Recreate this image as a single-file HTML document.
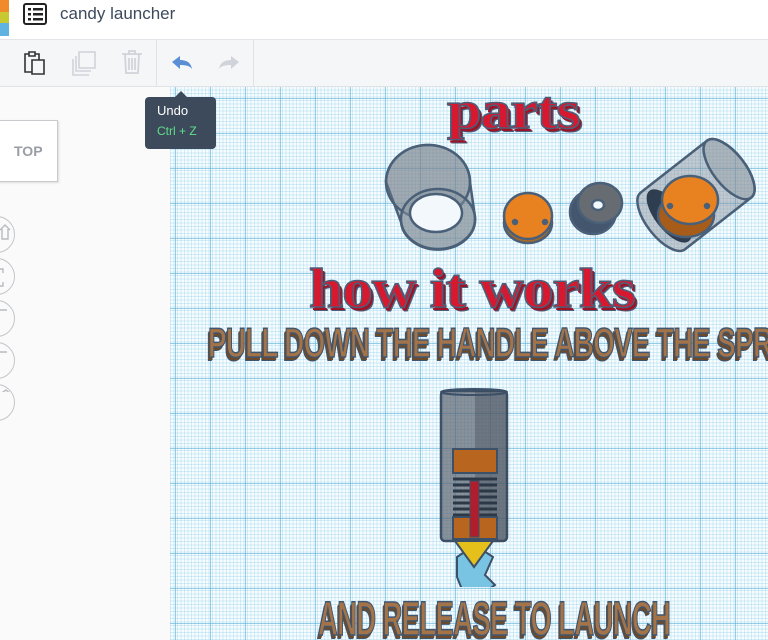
<!DOCTYPE html>
<html><head><meta charset="utf-8"><style>
*{margin:0;padding:0;box-sizing:border-box}
body{width:768px;height:640px;overflow:hidden;position:relative;font-family:"Liberation Sans",sans-serif;background:#fafafa}
.hdr{position:absolute;left:0;top:0;width:768px;height:40px;background:#fff;border-bottom:1px solid #e2e4e8}
.tb{position:absolute;left:0;top:40px;width:768px;height:47px;background:#f5f6f8;border-bottom:1px solid #e0e2e6}
.grid{position:absolute;left:170px;top:87px;width:598px;height:553px;background-color:#f7fcfe;
background-image:
linear-gradient(90deg,rgba(90,175,215,.6) 1px,transparent 1px),
linear-gradient(0deg,rgba(90,175,215,.6) 1px,transparent 1px),
linear-gradient(90deg,rgba(130,200,232,.3) 1px,transparent 1px),
linear-gradient(0deg,rgba(130,200,232,.3) 1px,transparent 1px);
background-size:35px 35px,35px 35px,3.5px 3.5px,3.5px 3.5px;background-position:5px 0,0 12px,0 0,0 0;overflow:hidden}
.t{position:absolute;white-space:nowrap}
.serif{font-family:"Liberation Serif",serif;font-weight:bold;color:#d7192f;-webkit-text-stroke:1.5px #4a5f7a;text-shadow:2px 3px 0 #a01225,3px 4px 0 #4a5f7a;transform-origin:0 0}
.cond{font-family:"Liberation Sans Narrow","Liberation Sans",sans-serif;font-weight:bold;color:#a47448;-webkit-text-stroke:1.5px #3f5670;text-shadow:-2px 3px 0 #6b4a2c,-3px 4px 0 #3f5670;transform-origin:0 0}
.circ{position:absolute;left:-22px;width:37px;height:37px;border:1.5px solid #c4c6ca;border-radius:50%;background:#fafafa}
</style></head><body>
<div class="hdr">
 <div style="position:absolute;left:0;top:0;width:9px;height:12px;background:#f08a2a"></div>
 <div style="position:absolute;left:0;top:12px;width:9px;height:11px;background:#c8c930"></div>
 <div style="position:absolute;left:0;top:23px;width:9px;height:13px;background:#5fb3e0"></div>
 <svg style="position:absolute;left:23px;top:3px" width="24" height="22" viewBox="0 0 24 22"><rect x="1" y="1" width="22" height="20" rx="2" fill="none" stroke="#222" stroke-width="2"/><g fill="#222"><rect x="5" y="5" width="3" height="2.5"/><rect x="10" y="5" width="10" height="2.5"/><rect x="5" y="10" width="3" height="2.5"/><rect x="10" y="10" width="10" height="2.5"/><rect x="5" y="15" width="3" height="2.5"/><rect x="10" y="15" width="10" height="2.5"/></g></svg>
 <div class="t" style="left:60px;top:4px;font-size:17px;color:#3c4a5c">candy launcher</div>
</div>
<div class="tb"></div>
<svg style="position:absolute;left:22px;top:50px" width="26" height="26" viewBox="0 0 26 26" fill="none" stroke="#333" stroke-width="1.6"><path d="M3 4h14v18H3z"/><path d="M7 2h6v4H7z" fill="#f5f6f8"/><path d="M10 10h12v14H10z" fill="#f5f6f8"/></svg>
<svg style="position:absolute;left:70px;top:50px" width="28" height="28" viewBox="0 0 28 28" fill="none" stroke="#d0d4da" stroke-width="1.6"><rect x="9" y="2" width="16" height="16"/><path d="M6 6v15h15"/><path d="M3 9v16h16"/></svg>
<svg style="position:absolute;left:120px;top:48px" width="24" height="28" viewBox="0 0 24 28" fill="none" stroke="#d0d4da" stroke-width="1.8"><path d="M2 6h20M9 6V3h6v3M5 6l1 19h12l1-19M9 10v12M12 10v12M15 10v12"/></svg>
<div style="position:absolute;left:156px;top:40px;width:1px;height:47px;background:#e0e2e6"></div>
<div style="position:absolute;left:253px;top:40px;width:1px;height:47px;background:#e0e2e6"></div>
<svg style="position:absolute;left:170px;top:54px" width="24" height="18" viewBox="0 0 24 18"><path d="M2 8l8-6v4c7 0 11 3 12 9-2-3-6-4-12-4v4z" fill="#5a8fd6"/></svg>
<svg style="position:absolute;left:217px;top:54px" width="24" height="18" viewBox="0 0 24 18"><path d="M22 8l-8-6v4C7 6 3 9 2 15c2-3 6-4 12-4v4z" fill="#d0d4da"/></svg>

<div style="position:absolute;left:-10px;top:120px;width:68px;height:62px;background:#fff;border:1.5px solid #c8cacd;box-shadow:1px 1px 2px #ddd"></div>
<div class="t" style="left:14px;top:143px;font-size:14px;font-weight:bold;color:#9a9ea4">TOP</div>
<div class="circ" style="top:216px"></div>
<div class="circ" style="top:258px"></div>
<div class="circ" style="top:300px"></div>
<div class="circ" style="top:342px"></div>
<div class="circ" style="top:384px"></div>
<svg style="position:absolute;left:0;top:222px" width="12" height="170" fill="none" stroke="#b8bbc0" stroke-width="1.4"><path d="M0 8l5-5 5 5M2 7v10h6V7"/><path d="M0 47h3v4M0 64h3v-4"/><path d="M0 88h7M0 130h7"/><path d="M0 172l6-4 5 4-6 5z"/></svg>

<div class="grid">
 <div class="t serif" style="left:277px;top:-8px;font-size:54px;letter-spacing:-1px;transform:scaleX(1.15)">parts</div>
 <svg style="position:absolute;left:0;top:0" width="598" height="553">
  <g stroke="#4a6078" stroke-width="2.5">
   <path d="M216 95 A42 37 0 0 1 300 95 L305 130 A37 30 0 0 1 231 135 Z" fill="rgba(120,130,140,.5)"/>
   <ellipse cx="258" cy="95" rx="42" ry="37" fill="rgba(120,130,140,.35)"/>
   <ellipse cx="268" cy="132" rx="37" ry="30" fill="rgba(140,150,160,.45)"/>
   <ellipse cx="266" cy="126" rx="26" ry="19" fill="#f2f8fb"/>
   <ellipse cx="358" cy="136" rx="24" ry="20" fill="#b26a1e"/>
   <ellipse cx="358" cy="129" rx="24" ry="23" fill="#e88220"/>
   <circle cx="345" cy="135" r="2" fill="#4a6078"/><circle cx="375" cy="135" r="2" fill="#4a6078"/>
   <ellipse cx="423" cy="125" rx="23" ry="22" fill="#44566e"/>
   <ellipse cx="430" cy="116" rx="22" ry="20" fill="#666c72"/>
   <ellipse cx="428" cy="118" rx="6" ry="5" fill="#f2f8fb"/>
   <g transform="translate(526,108) rotate(-38)">
    <path d="M-42 -36 H42 A16 36 0 0 1 42 36 H-42 A16 36 0 0 1 -42 -36 Z" fill="rgba(130,140,150,.45)"/>
    <ellipse cx="42" cy="0" rx="16" ry="36" fill="rgba(130,140,150,.35)"/>
    <ellipse cx="-34" cy="0" rx="14" ry="32" fill="#2e3d50" stroke="none"/>
   </g>
   <ellipse cx="516" cy="128" rx="28" ry="22" fill="#a85c1a"/>
   <ellipse cx="520" cy="113" rx="28" ry="24" fill="#e88220"/>
   <circle cx="500" cy="119" r="2" fill="#4a6078"/><circle cx="537" cy="119" r="2" fill="#4a6078"/>
  </g>
 </svg>
 <div class="t serif" style="left:139px;top:170px;font-size:56px;letter-spacing:-1px;transform:scaleX(1.1)">how it works</div>
 <div class="t cond" style="left:38px;top:232px;font-size:42px;letter-spacing:-1px;transform:scaleX(.66)">PULL DOWN THE HANDLE ABOVE THE SPRING</div>
 <svg style="position:absolute;left:265px;top:300px" width="80" height="200" viewBox="0 0 80 200">
  <rect x="6" y="4" width="66" height="150" rx="4" fill="rgba(90,100,112,.7)" stroke="#3c5068" stroke-width="2.5"/>
  <rect x="40" y="4" width="32" height="150" fill="rgba(60,70,80,.35)"/>
  <ellipse cx="39" cy="5" rx="33" ry="3" fill="none" stroke="#3c5068" stroke-width="2"/>
  <rect x="18" y="62" width="44" height="24" fill="#b8661f" stroke="#3c5068" stroke-width="2"/>
  <g stroke="#2c3846" stroke-width="3"><path d="M18 92h44M18 98h44M18 104h44M18 110h44M18 116h44M18 122h44M18 128h44"/></g>
  <rect x="18" y="130" width="44" height="22" fill="#b8661f" stroke="#3c5068" stroke-width="2"/>
  <rect x="35" y="94" width="9" height="56" fill="#b01e2e" stroke="#3c5068" stroke-width="1"/>
  <path d="M22 170 L40 158 L58 170 L50 188 L60 198 L50 205 L28 205 L22 190 Z" fill="#78c4e2" stroke="#3c5068" stroke-width="2"/>
  <path d="M20 154 H58 L39 180 Z" fill="#e6c01a" stroke="#3c5068" stroke-width="2"/>
 </svg>
 <div class="t cond" style="left:148px;top:505px;font-size:48px;letter-spacing:-1px;transform:scaleX(.57)">AND RELEASE TO LAUNCH</div>
</div>

<div style="position:absolute;left:145px;top:97px;width:71px;height:52px;background:#3d4a5c;border-radius:4px"></div>
<div style="position:absolute;left:175px;top:91px;width:0;height:0;border-left:6px solid transparent;border-right:6px solid transparent;border-bottom:6px solid #3d4a5c"></div>
<div class="t" style="left:157px;top:103px;font-size:13px;color:#fff">Undo</div>
<div class="t" style="left:157px;top:124px;font-size:12px;color:#5fe08a">Ctrl + Z</div>
</body></html>
